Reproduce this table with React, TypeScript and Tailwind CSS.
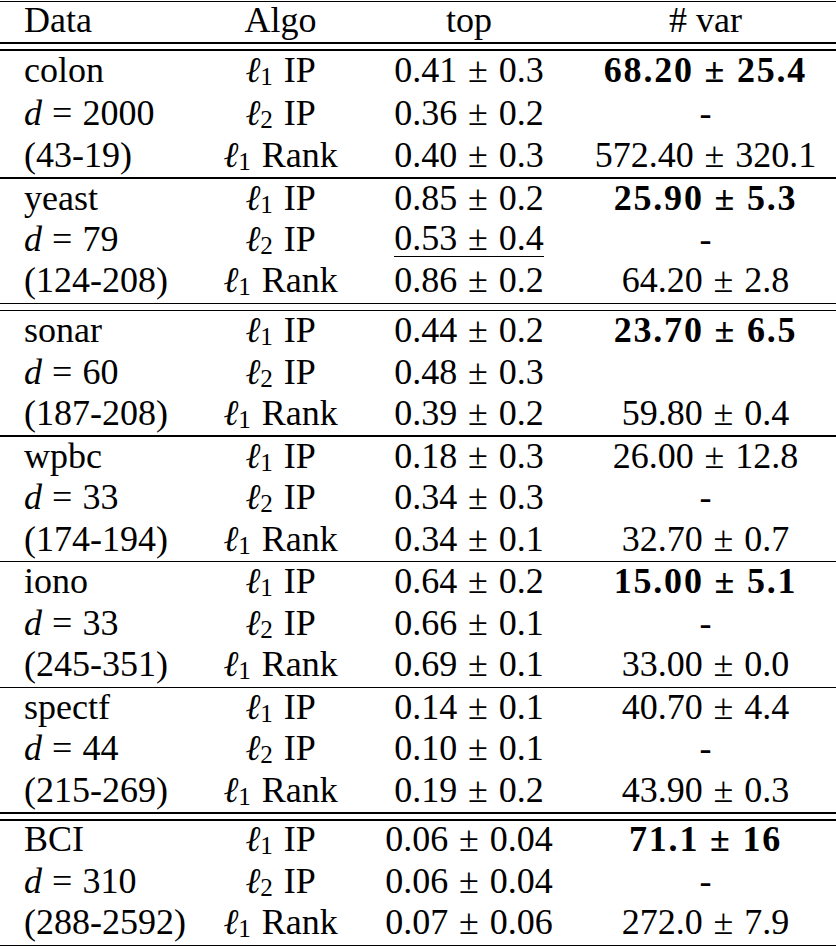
import React from 'react';

type Row = [React.ReactNode, React.ReactNode, React.ReactNode, React.ReactNode];

const Pm: React.FC<{ a: string; b: string; bold?: boolean }> = ({ a, b, bold }) => (
  <span className={bold ? 'font-bold tracking-[0.05em]' : ''}>
    {a}
    <span className="mx-[0.3em]">±</span>
    {b}
  </span>
);

const Ell: React.FC<{ n: number; label: string }> = ({ n, label }) => (
  <span>
    <span className="italic">ℓ</span>
    <sub className="text-[0.7em] relative top-[0.12em]">{n}</sub>
    <span className="ml-[0.3em]">{label}</span>
  </span>
);

const Dim: React.FC<{ n: number }> = ({ n }) => (
  <span>
    <span className="italic">d</span>
    <span className="mx-[0.28em]">=</span>
    {n}
  </span>
);

const Rule = () => <div className="h-[1.4px] bg-black" />;

const DoubleRule = () => (
  <>
    <Rule />
    <div className="h-[5.6px]" />
    <Rule />
  </>
);

const TableRow: React.FC<{ cells: Row; height: string }> = ({ cells, height }) => (
  <div className={`grid grid-cols-[198px_165px_212px_261px] items-end pb-[4.5px] leading-none ${height}`}>
    <div className="pl-[24px] whitespace-nowrap">{cells[0]}</div>
    <div className="text-center whitespace-nowrap">{cells[1]}</div>
    <div className="text-center whitespace-nowrap">{cells[2]}</div>
    <div className="text-center whitespace-nowrap">{cells[3]}</div>
  </div>
);

const block = (name: string, d: number, size: string, top: [string, string][], vars: React.ReactNode[]): Row[] => [
  [name, <Ell n={1} label="IP" />, <Pm a={top[0][0]} b={top[0][1]} />, vars[0]],
  [<Dim n={d} />, <Ell n={2} label="IP" />, <Pm a={top[1][0]} b={top[1][1]} />, vars[1]],
  [size, <Ell n={1} label="Rank" />, <Pm a={top[2][0]} b={top[2][1]} />, vars[2]],
];

const dash = '-';

const App: React.FC = () => {
  const colon = block('colon', 2000, '(43-19)', [['0.41', '0.3'], ['0.36', '0.2'], ['0.40', '0.3']], [
    <Pm a="68.20" b="25.4" bold />,
    dash,
    <Pm a="572.40" b="320.1" />,
  ]);

  const yeast: Row[] = [
    ['yeast', <Ell n={1} label="IP" />, <Pm a="0.85" b="0.2" />, <Pm a="25.90" b="5.3" bold />],
    [
      <Dim n={79} />,
      <Ell n={2} label="IP" />,
      <span className="inline-block border-b-[1.4px] border-black">
        <Pm a="0.53" b="0.4" />
      </span>,
      dash,
    ],
    ['(124-208)', <Ell n={1} label="Rank" />, <Pm a="0.86" b="0.2" />, <Pm a="64.20" b="2.8" />],
  ];

  const sonar = block('sonar', 60, '(187-208)', [['0.44', '0.2'], ['0.48', '0.3'], ['0.39', '0.2']], [
    <Pm a="23.70" b="6.5" bold />,
    '',
    <Pm a="59.80" b="0.4" />,
  ]);

  const wpbc = block('wpbc', 33, '(174-194)', [['0.18', '0.3'], ['0.34', '0.3'], ['0.34', '0.1']], [
    <Pm a="26.00" b="12.8" />,
    dash,
    <Pm a="32.70" b="0.7" />,
  ]);

  const iono = block('iono', 33, '(245-351)', [['0.64', '0.2'], ['0.66', '0.1'], ['0.69', '0.1']], [
    <Pm a="15.00" b="5.1" bold />,
    dash,
    <Pm a="33.00" b="0.0" />,
  ]);

  const spectf = block('spectf', 44, '(215-269)', [['0.14', '0.1'], ['0.10', '0.1'], ['0.19', '0.2']], [
    <Pm a="40.70" b="4.4" />,
    dash,
    <Pm a="43.90" b="0.3" />,
  ]);

  const bci = block('BCI', 310, '(288-2592)', [['0.06', '0.04'], ['0.06', '0.04'], ['0.07', '0.06']], [
    <Pm a="71.1" b="16" bold />,
    dash,
    <Pm a="272.0" b="7.9" />,
  ]);

  const renderRows = (rows: Row[], height: string) =>
    rows.map((r, i) => <TableRow key={i} cells={r} height={height} />);

  return (
    <div className="w-[836px] h-[950px] bg-white text-black text-[36px] pt-px font-['Liberation_Serif','DejaVu_Serif',serif]">
      <Rule />
      <TableRow cells={['Data', 'Algo', 'top', '# var']} height="h-[40px]" />
      <DoubleRule />
      {renderRows(colon, 'h-[42.2px]')}
      <Rule />
      {renderRows(yeast, 'h-[41.4px]')}
      <DoubleRule />
      {renderRows(sonar, 'h-[41.4px]')}
      <Rule />
      {renderRows(wpbc, 'h-[41.4px]')}
      <Rule />
      {renderRows(iono, 'h-[41.4px]')}
      <Rule />
      {renderRows(spectf, 'h-[41.4px]')}
      <DoubleRule />
      {renderRows(bci, 'h-[41.4px]')}
      <Rule />
    </div>
  );
};

export default App;
